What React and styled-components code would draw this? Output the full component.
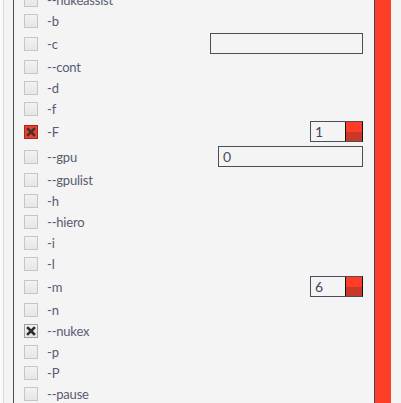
import styled, { createGlobalStyle } from "styled-components";

const GlobalStyle = createGlobalStyle`
  html, body {
    margin: 0;
    padding: 0;
    background: #f4f4f4;
    overflow: hidden;
  }
`;

const Frame = styled.div`
  display: flex;
  width: 401px;
  height: 403px;
  overflow: hidden;
  background: #f4f4f4;
  font-family: Lato, "DejaVu Sans", sans-serif;
`;

const Gutter = styled.div`
  width: 10px;
  flex-shrink: 0;
  border-left: 3px solid #fafafa;
  border-right: 1px solid #4b4f58;
  box-shadow: inset 1px 0 0 #dcdcdc;
`;

const Content = styled.div`
  flex: 1;
  display: flex;
  flex-direction: column;
  padding: 0 11px 0 10px;
  margin-top: -11px;
`;

const Row = styled.div`
  display: flex;
  align-items: center;
  height: ${(p) => (p.$tall ? 25 : 21)}px;
  flex-shrink: 0;
`;

const Box = styled.span`
  width: 14px;
  height: 14px;
  box-sizing: border-box;
  flex-shrink: 0;
  margin-right: 9px;
  display: flex;
  align-items: center;
  justify-content: center;
  border: 1px solid ${(p) => (p.$tone === "red" ? "#a8281a" : p.$tone === "dark" ? "#a0a0a0" : "#c6c6c6")};
  background: ${(p) =>
    p.$tone === "red" ? "#e8432e" : "linear-gradient(#f2f2f2, #e6e6e6)"};
`;

const Label = styled.span`
  font-size: 13px;
  color: #585c72;
  letter-spacing: -0.2px;
`;

const TextField = styled.div`
  margin-left: auto;
  width: ${(p) => p.$width}px;
  height: 21px;
  box-sizing: border-box;
  border: 1px solid #4b4f58;
  background: #f4f4f4;
  display: flex;
  align-items: center;
  padding-left: 4px;
  font-size: 14px;
  color: #4a4e62;
`;

const NumberField = styled.div`
  margin-left: auto;
  width: 53px;
  height: 21px;
  box-sizing: border-box;
  border: 1px solid #4b4f58;
  border-right: 1px solid #111;
  display: flex;
  background: #f4f4f4;
`;

const NumberValue = styled.span`
  flex: 1;
  display: flex;
  align-items: center;
  padding-left: 4px;
  font-size: 14px;
  color: #3f4566;
`;

const Spinner = styled.div`
  width: 16px;
  display: flex;
  flex-direction: column;
  border-left: 1px solid #111;
  span:first-child {
    flex: 1;
    background: #ff3b2a;
  }
  span:last-child {
    flex: 1;
    background: #c9392a;
  }
`;

const Side = styled.div`
  width: 16px;
  flex-shrink: 0;
  background: #ff3e2a;
  border-left: 1px solid #3c4a5e;
  margin-right: 10px;
`;

const Cross = ({ color }) => (
  <svg width="10" height="10" viewBox="0 0 10 10">
    <path d="M2 2 L8 8 M8 2 L2 8" stroke={color} strokeWidth="2.6" strokeLinecap="square" />
  </svg>
);

const options = [
  { name: "--nukeassist" },
  { name: "-b" },
  { name: "-c", field: "text", width: 153, value: "" },
  { name: "--cont" },
  { name: "-d" },
  { name: "-f" },
  { name: "-F", tone: "red", field: "number", value: "1" },
  { name: "--gpu", field: "text", width: 145, value: "0" },
  { name: "--gpulist" },
  { name: "-h" },
  { name: "--hiero" },
  { name: "-i" },
  { name: "-l" },
  { name: "-m", field: "number", value: "6" },
  { name: "-n" },
  { name: "--nukex", tone: "dark" },
  { name: "-p" },
  { name: "-P" },
  { name: "--pause" },
];

export default function App() {
  return (
    <>
      <GlobalStyle />
      <Frame>
        <Gutter />
        <Content>
          {options.map((o) => (
            <Row key={o.name} $tall={!!o.field}>
              <Box $tone={o.tone}>
                {o.tone === "red" && <Cross color="#4a3030" />}
                {o.tone === "dark" && <Cross color="#2e2e2e" />}
              </Box>
              <Label>{o.name}</Label>
              {o.field === "text" && <TextField $width={o.width}>{o.value}</TextField>}
              {o.field === "number" && (
                <NumberField>
                  <NumberValue>{o.value}</NumberValue>
                  <Spinner>
                    <span />
                    <span />
                  </Spinner>
                </NumberField>
              )}
            </Row>
          ))}
        </Content>
        <Side />
      </Frame>
    </>
  );
}
